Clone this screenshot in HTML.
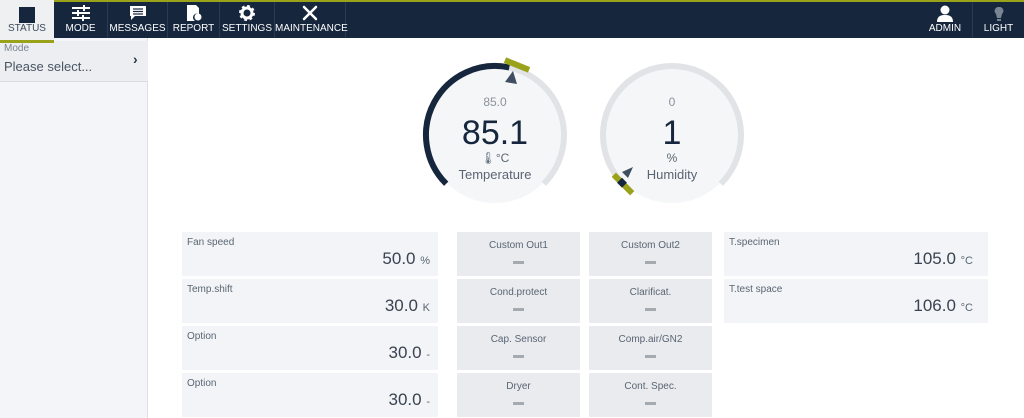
<!DOCTYPE html>
<html><head><meta charset="utf-8">
<style>
*{box-sizing:border-box;margin:0;padding:0}
body{width:1024px;height:418px;overflow:hidden;background:#fff;font-family:"Liberation Sans",sans-serif;position:relative}
.nav{position:absolute;left:0;top:0;width:1024px;height:38px;background:#15263d;border-top:2px solid #9aa21a;z-index:5}
.tab{position:absolute;top:0;height:36px;border-right:1px solid #2a3a52;color:#fff;font-size:10px;text-align:center}
.tab .lbl{position:absolute;bottom:4px;left:0;right:0}
.tab svg{position:absolute;top:3px;left:50%;transform:translateX(-50%)}
.status{background:#eef0f2;color:#3b4a5c;height:43px;border-bottom:3px solid #9aa21a;border-right:none}
.side{position:absolute;left:0;top:38px;width:148px;height:380px;background:#f3f5f8;border-right:1px solid #dde0e4}
.mode{position:absolute;left:0;top:41px;width:148px;height:41px;background:#eceef1;border-bottom:1px solid #d8dbdf}
.card{position:absolute;background:#f2f4f7}
.card .t{position:absolute;left:5px;top:5px;font-size:10px;color:#5a6573}
.card .v{position:absolute;right:8px;top:17px;font-size:17px;color:#3a4350}
.card .v small{font-size:11px;color:#5a6573}
.o{position:absolute;background:#e9ebee;width:123px;height:44px}
.o .t{position:absolute;left:0;right:0;top:8px;text-align:center;font-size:10px;color:#5a6573}
.o .d{position:absolute;left:56px;top:29px;width:11px;height:3px;background:#a5aab0}
</style></head><body>
<div class="nav">
 <div class="tab status" style="left:0;width:54px;top:-2px">
  <svg width="16" height="16" style="top:7px"><rect width="16" height="16" fill="#15263d"/></svg>
  <div class="lbl" style="bottom:6px">STATUS</div></div>
 <div class="tab" style="left:54px;width:54px">
  <svg width="18" height="16"><g stroke="#fff" stroke-width="2"><line x1="0" y1="3" x2="18" y2="3"/><line x1="0" y1="8" x2="18" y2="8"/><line x1="0" y1="13" x2="18" y2="13"/></g><g fill="#fff"><rect x="11" y="0" width="2" height="6"/><rect x="5" y="5" width="2" height="6"/><rect x="10" y="10" width="2" height="6"/></g></svg>
  <div class="lbl">MODE</div></div>
 <div class="tab" style="left:108px;width:60px">
  <svg width="18" height="16"><path d="M1 1h16v10H6l-4 4v-4H1z" fill="#fff"/><g stroke="#15263d" stroke-width="1.2"><line x1="4" y1="4" x2="14" y2="4"/><line x1="4" y1="6.5" x2="14" y2="6.5"/><line x1="4" y1="9" x2="14" y2="9"/></g></svg>
  <div class="lbl">MESSAGES</div></div>
 <div class="tab" style="left:168px;width:52px">
  <svg width="16" height="16"><path d="M1 0h9l3 3v6a4 4 0 0 0-4 7H1z" fill="#fff"/><circle cx="12" cy="12" r="3.5" fill="#fff"/></svg>
  <div class="lbl">REPORT</div></div>
 <div class="tab" style="left:220px;width:55px">
  <svg width="16" height="16"><circle cx="8" cy="8" r="6" fill="none" stroke="#fff" stroke-width="4" stroke-dasharray="2.4 2.3"/><circle cx="8" cy="8" r="5" fill="none" stroke="#fff" stroke-width="3"/></svg>
  <div class="lbl">SETTINGS</div></div>
 <div class="tab" style="left:275px;width:71px">
  <svg width="16" height="16"><g stroke="#fff" stroke-width="2.5" stroke-linecap="round"><line x1="2" y1="14" x2="14" y2="2"/><line x1="2" y1="2" x2="14" y2="14"/></g></svg>
  <div class="lbl">MAINTENANCE</div></div>
 <div class="tab" style="left:918px;width:55px;border-right:1px solid #2a3a52">
  <svg width="16" height="17"><circle cx="8" cy="5" r="4.5" fill="#fff"/><path d="M0 17c0-6 4-7 8-7s8 1 8 7z" fill="#fff"/></svg>
  <div class="lbl">ADMIN</div></div>
 <div class="tab" style="left:973px;width:51px;border:none">
  <svg width="10" height="16" style="top:5px"><path d="M5 0a4 4 0 0 0-3 7l1 4h4l1-4a4 4 0 0 0-3-7z" fill="#7a8594"/><rect x="3" y="12" width="4" height="2" fill="#7a8594"/></svg>
  <div class="lbl">LIGHT</div></div>
</div>
<div class="side"></div>
<div class="mode">
 <div style="position:absolute;left:4px;top:2px;font-size:10px;color:#7a8390">Mode</div>
 <div style="position:absolute;left:4px;top:18px;font-size:13px;color:#4a5563">Please select...</div>
 <div style="position:absolute;left:133px;top:10px;font-size:14px;color:#2b3544;font-weight:bold">›</div>
</div>

<svg style="position:absolute;left:0;top:0" width="1024" height="230">
 <circle cx="495" cy="135" r="68" fill="#f5f6f8"/>
 <path d="M446.2 183.8 A69 69 0 1 1 543.8 183.8" fill="none" stroke="#e1e3e6" stroke-width="6"/>
 <path d="M446.2 183.8 A69 69 0 0 1 509.3 67.5" fill="none" stroke="#15263d" stroke-width="6"/>
 <rect x="504" y="62" width="26" height="6" fill="#9aa21a" transform="rotate(22 517 65)"/>
 <polygon points="513,71 517,84 505,82" fill="#3f4e60"/>
 <circle cx="672" cy="135" r="68" fill="#f5f6f8"/>
 <path d="M623.2 183.8 A69 69 0 1 1 720.8 183.8" fill="none" stroke="#e1e3e6" stroke-width="6"/>
 <rect x="610" y="181" width="26" height="6" fill="#9aa21a" transform="rotate(45 623 184)"/>
 <rect x="619" y="179" width="7" height="7" fill="#15263d" transform="rotate(45 622 182)"/>
 <polygon points="633,167 628,178 622,172" fill="#3f4e60"/>
</svg>
<div style="position:absolute;left:445px;top:95px;width:100px;text-align:center;font-size:12px;color:#8a929c">85.0</div>
<div style="position:absolute;left:435px;top:114px;width:120px;text-align:center;font-size:34px;color:#15263d">85.1</div>
<div style="position:absolute;left:445px;top:151px;width:100px;text-align:center;font-size:12px;color:#5a6573">🌡°C</div>
<div style="position:absolute;left:435px;top:167px;width:120px;text-align:center;font-size:13px;color:#5a6573">Temperature</div>
<div style="position:absolute;left:622px;top:95px;width:100px;text-align:center;font-size:12px;color:#8a929c">0</div>
<div style="position:absolute;left:612px;top:114px;width:120px;text-align:center;font-size:34px;color:#15263d">1</div>
<div style="position:absolute;left:622px;top:151px;width:100px;text-align:center;font-size:12px;color:#5a6573">%</div>
<div style="position:absolute;left:612px;top:167px;width:120px;text-align:center;font-size:13px;color:#5a6573">Humidity</div>

<div class="card" style="left:182px;top:232px;width:256px;height:44px"><div class="t">Fan speed</div><div class="v">50.0 <small>%</small></div></div>
<div class="card" style="left:182px;top:279px;width:256px;height:44px"><div class="t">Temp.shift</div><div class="v">30.0 <small>K</small></div></div>
<div class="card" style="left:182px;top:326px;width:256px;height:44px"><div class="t">Option</div><div class="v">30.0 <small>-</small></div></div>
<div class="card" style="left:182px;top:373px;width:256px;height:44px"><div class="t">Option</div><div class="v">30.0 <small>-</small></div></div>

<div class="o" style="left:457px;top:232px"><div class="t">Custom Out1</div><div class="d"></div></div>
<div class="o" style="left:589px;top:232px"><div class="t">Custom Out2</div><div class="d"></div></div>
<div class="o" style="left:457px;top:279px"><div class="t">Cond.protect</div><div class="d"></div></div>
<div class="o" style="left:589px;top:279px"><div class="t">Clarificat.</div><div class="d"></div></div>
<div class="o" style="left:457px;top:326px"><div class="t">Cap. Sensor</div><div class="d"></div></div>
<div class="o" style="left:589px;top:326px"><div class="t">Comp.air/GN2</div><div class="d"></div></div>
<div class="o" style="left:457px;top:373px"><div class="t">Dryer</div><div class="d"></div></div>
<div class="o" style="left:589px;top:373px"><div class="t">Cont. Spec.</div><div class="d"></div></div>

<div class="card" style="left:724px;top:232px;width:264px;height:44px"><div class="t">T.specimen</div><div class="v" style="right:15px">105.0 <small>°C</small></div></div>
<div class="card" style="left:724px;top:279px;width:264px;height:44px"><div class="t">T.test space</div><div class="v" style="right:15px">106.0 <small>°C</small></div></div>
</body></html>
